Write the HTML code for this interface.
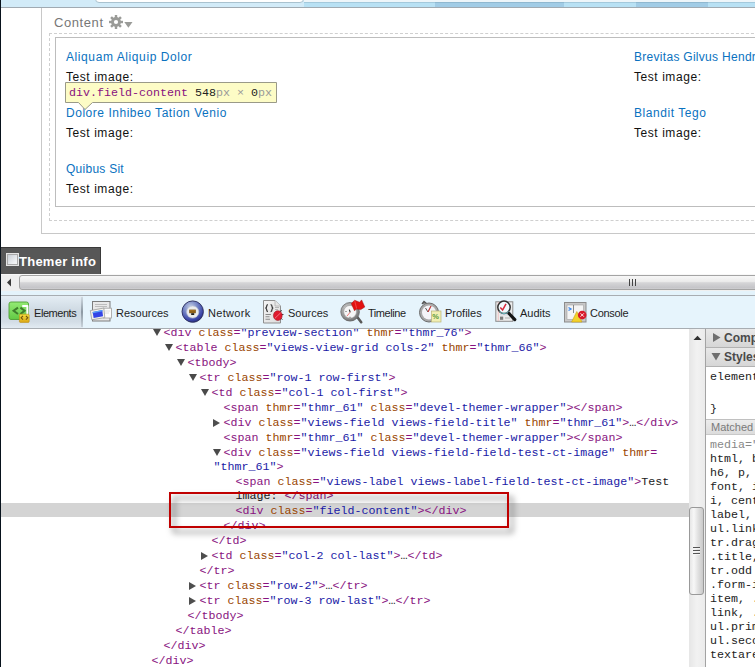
<!DOCTYPE html>
<html><head><meta charset="utf-8">
<style>
*{box-sizing:border-box}
html,body{margin:0;padding:0}
body{width:755px;height:667px;overflow:hidden;position:relative;background:#fff;font-family:"Liberation Sans",sans-serif}
.a{position:absolute}
.t{position:absolute;white-space:pre;line-height:1}
.ttl{font-size:12px;color:#0a72c0}
.lbl{font-size:12px;color:#111}
.codep{position:absolute;left:0;top:329px;width:689px;height:338px;overflow:hidden;font-family:"Liberation Mono",monospace;font-size:11.67px}
.ln{position:absolute;white-space:pre;line-height:14px;height:14px}
.tg{color:#881280}
.an{color:#994500}
.av{color:#1a1aa6}
.tx{color:#222}
.tri-d,.tri-r{position:absolute;width:0;height:0}
.tri-d{border-left:4px solid transparent;border-right:4px solid transparent;border-top:7px solid #4a4a4a;margin-top:3px}
.tri-r{border-top:4px solid transparent;border-bottom:4px solid transparent;border-left:7px solid #4e4e4e;margin-top:3px}
.tabl{position:absolute;top:307px;font-size:11px;color:#1e1e1e;white-space:pre;line-height:12px}
.sbl{position:absolute;left:710px;white-space:pre;font-family:"Liberation Mono",monospace;font-size:11.67px;line-height:14px;color:#222}
.ico{position:absolute;top:300px}
</style></head><body>

<!-- top band -->
<div class="a" style="left:0;top:0;width:755px;height:7px;background:#d2ebf8"></div>
<div class="a" style="left:95px;top:-6px;width:209px;height:9px;background:#fff;border:1px solid #a9c2cf;border-radius:4px"></div>
<div class="a" style="left:304px;top:0;width:451px;height:2px;background:#eef6fa"></div>
<div class="a" style="left:304px;top:2px;width:451px;height:5px;background:#b8e1f4;border-top:1px solid #a3c9dc"></div>
<div class="a" style="left:435px;top:2px;width:129px;height:5px;background:#a1cce6;border-top:1px solid #8fb8d0"></div>
<div class="a" style="left:636px;top:2px;width:72px;height:5px;background:#a1cce6;border-top:1px solid #8fb8d0"></div>
<div class="a" style="left:0;top:7px;width:755px;height:1px;background:#a0aab2"></div>
<!-- left dark edge -->
<div class="a" style="left:0;top:0;width:1px;height:667px;background:#08121c;z-index:5"></div>

<!-- page frame -->
<div class="a" style="left:41px;top:8px;width:714px;height:226px;border-left:1px solid #c8c8c8;border-bottom:1px solid #c8c8c8"></div>
<div class="t" style="left:54px;top:16px;font-size:13px;letter-spacing:0.58px;color:#777">Content</div>
<svg class="a" style="left:108px;top:14px" width="26" height="16" viewBox="0 0 26 16">
  <g fill="#9a9b98">
    <circle cx="8" cy="8" r="4.9"/>
    <g transform="translate(8 8)">
      <rect x="-1.2" y="-7" width="2.4" height="14"/>
      <rect x="-1.2" y="-7" width="2.4" height="14" transform="rotate(45)"/>
      <rect x="-1.2" y="-7" width="2.4" height="14" transform="rotate(90)"/>
      <rect x="-1.2" y="-7" width="2.4" height="14" transform="rotate(135)"/>
    </g>
  </g>
  <circle cx="8" cy="8" r="2.1" fill="#fff"/>
  <path d="M16.3 8 L24.5 8 L20.4 13.8 Z" fill="#9a9b98"/>
</svg>

<!-- dashed box -->
<div class="a" style="left:49px;top:33px;width:720px;height:188px;border:1px dashed #cfcfcf"></div>
<!-- solid box -->
<div class="a" style="left:55px;top:37px;width:710px;height:170px;border:1px solid #bdbdbd"></div>

<div class="t ttl" style="left:66px;top:51px;letter-spacing:0.59px">Aliquam Aliquip Dolor</div>
<div class="t lbl" style="left:66px;top:71px;letter-spacing:0.56px">Test image:</div>
<div class="t ttl" style="left:66px;top:107px;letter-spacing:0.53px">Dolore Inhibeo Tation Venio</div>
<div class="t lbl" style="left:66px;top:127px;letter-spacing:0.56px">Test image:</div>
<div class="t ttl" style="left:66px;top:163px;letter-spacing:0.26px">Quibus Sit</div>
<div class="t lbl" style="left:66px;top:183px;letter-spacing:0.56px">Test image:</div>
<div class="t ttl" style="left:634px;top:51px;letter-spacing:0.29px">Brevitas Gilvus Hendrerit</div>
<div class="t lbl" style="left:634px;top:71px;letter-spacing:0.56px">Test image:</div>
<div class="t ttl" style="left:634px;top:107px;letter-spacing:0.55px">Blandit Tego</div>
<div class="t lbl" style="left:634px;top:127px;letter-spacing:0.56px">Test image:</div>

<!-- tooltip -->
<svg class="a" style="left:64px;top:82px" width="215" height="30" viewBox="0 0 215 30">
  <path d="M1.5 0.5 H212.5 V20.5 H28.5 L21 27.5 L14.5 20.5 H1.5 Z" fill="#fdfcc6" stroke="#9a9a88" stroke-width="1"/>
</svg>
<div class="t" style="left:69px;top:86px;font-family:'Liberation Mono',monospace;font-size:11.67px;line-height:14px"><span style="color:#881280">div.field-content</span> <span style="color:#222">548</span><span style="color:#999">px × </span><span style="color:#222">0</span><span style="color:#999">px</span></div>

<!-- themer info -->
<div class="a" style="left:0;top:247px;width:101px;height:27px;background:#575757;border-top:1px solid #3a3a3a;border-right:1px solid #3a3a3a"></div>
<div class="a" style="left:6px;top:253px;width:13px;height:13px;border:1px solid #e4e4e4;box-shadow:inset 0 0 0 1px #a9a9a9;background:linear-gradient(135deg,#c3c9d1,#eef0f2 70%,#f7f7f7)"></div>
<div class="t" style="left:19px;top:255px;font-size:13px;font-weight:bold;letter-spacing:0.25px;color:#fff">Themer info</div>

<!-- h scrollbar -->
<div class="a" style="left:1px;top:274px;width:754px;height:17px;background:#efefef;border-top:1px solid #f8f8f8"></div>
<svg class="a" style="left:6px;top:278px" width="6" height="9"><path d="M1 4.5 L5 0.5 V8.5 Z" fill="#3a3a3a"/></svg>
<div class="a" style="left:19px;top:275px;width:745px;height:15px;border:1px solid #a4a4a4;border-radius:3px;background:linear-gradient(#f7f7f7 0%,#ebebeb 42%,#d5d5d7 52%,#c5c5c9 88%,#cdcdd0 100%)"></div>
<div class="a" style="left:629px;top:279px;width:1px;height:7px;background:#444"></div>
<div class="a" style="left:632px;top:279px;width:1px;height:7px;background:#444"></div>
<div class="a" style="left:635px;top:279px;width:1px;height:7px;background:#444"></div>
<div class="a" style="left:1px;top:291px;width:754px;height:4px;background:#e4f3fb"></div>

<!-- toolbar -->
<div class="a" style="left:1px;top:295px;width:754px;height:1px;background:#a8adb2"></div>
<div class="a" style="left:1px;top:296px;width:754px;height:32px;background:#e6f4fc"></div>
<div class="a" style="left:1px;top:296px;width:82px;height:32px;background:linear-gradient(#e4edf4,#cdd8e1 50%,#d3dde6 80%,#e2ebf2)"></div>
<div class="a" style="left:81px;top:297px;width:2px;height:30px;background:linear-gradient(#d0dae2,#8d99a3 50%,#c9d3db);filter:blur(0.4px)"></div>
<div class="a" style="left:0;top:328px;width:755px;height:1px;background:#a8adb2"></div>
<!-- Elements icon -->
<svg class="a" style="left:8px;top:301px" width="23" height="23" viewBox="0 0 23 23">
  <defs>
    <linearGradient id="gg" x1="0" y1="0" x2="0" y2="1"><stop offset="0" stop-color="#94ea74"/><stop offset="1" stop-color="#62c944"/></linearGradient>
    <linearGradient id="yg" x1="0" y1="0" x2="0" y2="1"><stop offset="0" stop-color="#f6dc3c"/><stop offset="1" stop-color="#dba716"/></linearGradient>
  </defs>
  <rect x="1" y="1" width="19.5" height="17.5" rx="2" fill="url(#gg)" stroke="#4f9e36" stroke-width="0.9"/>
  <path d="M10 6.6 L5.6 9.8 L10 13" fill="none" stroke="#3f7d2c" stroke-width="2"/>
  <path d="M12.4 6.6 L16.6 9.8 L12.4 13" fill="none" stroke="#3f7d2c" stroke-width="2"/>
  <path d="M15 4.9 H19.4 V14.5" fill="none" stroke="#fff" stroke-width="2" stroke-linecap="round" stroke-linejoin="round"/>
  <rect x="11.4" y="13.2" width="9.8" height="8.2" rx="1" fill="url(#yg)" stroke="#b98d10" stroke-width="0.6"/>
  <path d="M15 14.9 L13.1 16.8 L15 18.7 M17.9 14.9 L19.8 16.8 L17.9 18.7" fill="none" stroke="#6d5510" stroke-width="1.1"/>
</svg>
<div class="tabl" style="left:34px;letter-spacing:-0.45px">Elements</div>

<!-- Resources icon -->
<svg class="a" style="left:86px;top:298px" width="30" height="28" viewBox="0 0 30 28">
  <rect x="6.5" y="3.5" width="17.5" height="19.5" fill="#e9e9e9" stroke="#7d7d7d" stroke-width="1"/>
  <path d="M9 6.5 H21 M9 8.5 H21" stroke="#bdbdbd" stroke-width="1"/>
  <rect x="17.5" y="10.2" width="8" height="9.8" fill="#fcfcfc" stroke="#a8a8a8" stroke-width="0.9"/>
  <path d="M19 13 H24 M19 15 H23" stroke="#d8d8d8" stroke-width="0.8"/>
  <path d="M4.3 12.6 L17.8 10 L18.8 19.6 L5.8 21.8 Z" fill="#f3f2ea" stroke="#9b9b9b" stroke-width="0.8"/>
  <path d="M6.6 14.1 L16.3 12.1 L17 18.2 L7.6 19.9 Z" fill="#3444e6"/>
  <path d="M6.6 14.1 L16.3 12.1 L16.4 13.2 L6.8 15.3 Z" fill="#58a6f8"/>
</svg>
<div class="tabl" style="left:116px">Resources</div>

<!-- Network icon -->
<svg class="a" style="left:180px;top:300px" width="26" height="24" viewBox="0 0 26 24">
  <defs><radialGradient id="ng" cx="0.4" cy="0.3" r="0.75"><stop offset="0" stop-color="#c9d3e6"/><stop offset="0.45" stop-color="#7383c4"/><stop offset="0.8" stop-color="#3a44a8"/><stop offset="1" stop-color="#242a70"/></radialGradient></defs>
  <circle cx="12.7" cy="11.6" r="10.7" fill="url(#ng)" stroke="#2a2d5a" stroke-width="0.9"/>
  <circle cx="12.7" cy="12" r="6.1" fill="#ececec" stroke="#b9c0d6" stroke-width="0.6"/>
  <rect x="9.2" y="9.6" width="6.6" height="3.6" fill="#7c5312"/>
  <path d="M10 10.6 H15 M10 12 H15" stroke="#b07a24" stroke-width="0.8"/>
  <rect x="11.2" y="13.2" width="3" height="1.8" fill="#1d1d1d"/>
</svg>
<div class="tabl" style="left:208px;letter-spacing:0.3px">Network</div>

<!-- Sources icon -->
<svg class="a" style="left:259px;top:298px" width="30" height="28" viewBox="0 0 30 28">
  <defs><linearGradient id="dg" x1="0" y1="0" x2="1" y2="1"><stop offset="0" stop-color="#f4f4f4"/><stop offset="1" stop-color="#dcdcdc"/></linearGradient></defs>
  <path d="M4.5 2.5 H16 L21.5 8 V25 H4.5 Z" fill="url(#dg)" stroke="#8f8f8f" stroke-width="1"/>
  <path d="M16 2.5 V8 H21.5" fill="#e6e6e6" stroke="#b0b0b0" stroke-width="0.8"/>
  <path d="M9 6.6 C7.6 6.6 7.6 7.4 7.6 8.6 C7.6 9.6 7.2 10 6.4 10.1 C7.2 10.2 7.6 10.6 7.6 11.6 C7.6 12.8 7.6 13.6 9 13.6" fill="none" stroke="#3d3d3d" stroke-width="1.3"/>
  <path d="M11.6 6.6 C13 6.6 13 7.4 13 8.6 C13 9.6 13.4 10 14.2 10.1 C13.4 10.2 13 10.6 13 11.6 C13 12.8 13 13.6 11.6 13.6" fill="none" stroke="#3d3d3d" stroke-width="1.3"/>
  <path d="M6.5 16.5 H12 M6.5 18.8 H10.5 M6.5 21.2 H11" stroke="#8a8a8a" stroke-width="1.1"/>
  <path d="M16 9.5 H20 M16 11.5 H19" stroke="#a8a8a8" stroke-width="0.8"/>
  <path d="M21 13.5 L23 12.5 M22 16.5 L24.5 16.5 M21.5 20 L23.5 21.5" stroke="#333" stroke-width="0.9"/>
  <ellipse cx="18.8" cy="17.6" rx="4.4" ry="4.9" fill="#e01a2e" stroke="#8a0c16" stroke-width="0.5"/>
  <path d="M15.8 20.4 L21.6 14.8" stroke="#f59aa2" stroke-width="0.7"/>
</svg>
<div class="tabl" style="left:288px">Sources</div>

<!-- Timeline icon -->
<svg class="a" style="left:338px;top:297px" width="30" height="30" viewBox="0 0 30 30">
  <defs><radialGradient id="rg" cx="0.4" cy="0.35" r="0.7"><stop offset="0" stop-color="#d8d8d8"/><stop offset="1" stop-color="#6e6e6e"/></radialGradient></defs>
  <path d="M18.5 19 L23.2 25.2" stroke="#5a5a5a" stroke-width="2.6" stroke-linecap="round"/>
  <circle cx="12.1" cy="14.8" r="9.3" fill="url(#rg)" stroke="#6a6a6a" stroke-width="0.8"/>
  <circle cx="12.1" cy="14.8" r="6.4" fill="#f6f6f6" stroke="#9a9a9a" stroke-width="0.6"/>
  <path d="M12.2 15.2 L9 19" stroke="#f06a6a" stroke-width="0.9"/>
  <path d="M12.2 15.2 L11.3 12.6" stroke="#333" stroke-width="1.1"/>
  <path d="M7.5 14.5 h1 M12 19.8 v1" stroke="#444" stroke-width="0.9"/>
  <path d="M13.3 6.6 L16.6 3.2 L21.6 5.3 L23.6 2.9 L26.8 10 L22.8 12.6 L18.3 12 L16.5 13.8 Z" fill="#e3100f" stroke="#a30a0a" stroke-width="0.5"/>
  <path d="M16.6 3.2 L18.6 11.6" stroke="#ff6a6a" stroke-width="0.8" opacity="0.7"/>
</svg>
<div class="tabl" style="left:368px;letter-spacing:-0.45px">Timeline</div>

<!-- Profiles icon -->
<svg class="a" style="left:418px;top:299px" width="24" height="25" viewBox="0 0 24 25">
  <path d="M4 5 L6 2.5 L8.5 4.5" fill="#777" stroke="#555" stroke-width="1.3"/>
  <circle cx="11" cy="13.5" r="9.5" fill="#a8a8a8" stroke="#6d6d6d" stroke-width="1"/>
  <circle cx="11" cy="13.5" r="7" fill="#f4f4f8"/>
  <path d="M7.5 9 L10 13 L13 7" fill="none" stroke="#444" stroke-width="0.9"/>
  <path d="M10 13 L13 7" stroke="#e33" stroke-width="0.9"/>
  <rect x="13.5" y="12" width="9.5" height="11" fill="#f2efb2" stroke="#b8b47a" stroke-width="0.7"/>
  <text x="14.3" y="19.5" font-family="Liberation Sans" font-size="7.5" font-weight="bold" fill="#5c9a3c">%</text>
</svg>
<div class="tabl" style="left:445px">Profiles</div>

<!-- Audits icon -->
<svg class="a" style="left:491px;top:297px" width="30" height="30" viewBox="0 0 30 30">
  <rect x="4.8" y="4.8" width="17" height="19.5" fill="#ececec" stroke="#8c8c8c" stroke-width="1"/>
  <path d="M7.3 5 V24" stroke="#f2b4b4" stroke-width="0.7"/>
  <path d="M9 15.5 H20 M9 17.8 H20" stroke="#c9d2e0" stroke-width="0.8"/>
  <rect x="9" y="19.6" width="3.2" height="3.2" fill="#7a7a7a"/>
  <path d="M14 21 H19" stroke="#b0b0b0" stroke-width="1"/>
  <path d="M18 16.5 L23.8 22.6" stroke="#151515" stroke-width="3.2" stroke-linecap="round"/>
  <circle cx="13" cy="10.3" r="6.2" fill="#f2fafd" stroke="#2e2e2e" stroke-width="1.5"/>
  <path d="M9.3 10.6 L11.6 13 L15 6.8" fill="none" stroke="#d8293a" stroke-width="1.5"/>
  <path d="M8.5 14.5 A6 6 0 0 0 17.5 14.5" fill="none" stroke="#7fe0ea" stroke-width="0.8"/>
</svg>
<div class="tabl" style="left:520px">Audits</div>

<!-- Console icon -->
<svg class="a" style="left:563px;top:300px" width="25" height="24" viewBox="0 0 25 24">
  <rect x="1.5" y="2.5" width="21.5" height="19.5" fill="#c8c8c8" stroke="#8c8c8c" stroke-width="1"/>
  <rect x="4" y="5" width="16.5" height="14.5" fill="#f5f5f5" stroke="#a0a0a0" stroke-width="0.6"/>
  <path d="M10.5 5 V13" stroke="#888" stroke-width="1"/>
  <path d="M5.5 7.5 L8 9 L5.5 10.5" fill="none" stroke="#3a8af0" stroke-width="1.3"/>
  <path d="M13.8 11.5 L8.6 22 H19 Z" fill="#f2d22e" stroke="#c9a210" stroke-width="0.6"/>
  <circle cx="19.2" cy="15" r="4.3" fill="#d81a2a"/>
  <path d="M17.5 13.3 L20.9 16.7 M20.9 13.3 L17.5 16.7" stroke="#fff" stroke-width="0.9"/>
</svg>
<div class="tabl" style="left:590px;letter-spacing:-0.3px">Console</div>

<!-- code panel -->
<div class="codep">
<div class="tri-d" style="left:153.0px;top:-3px"></div>
<div class="ln" style="left:163.6px;top:-3px"><span class="tg">&lt;div</span> <span class="an">class</span><span class="tg">=</span><span class="av">"preview-section"</span> <span class="an">thmr</span><span class="tg">=</span><span class="av">"thmr_76"</span><span class="tg">&gt;</span></div>
<div class="tri-d" style="left:165.0px;top:12px"></div>
<div class="ln" style="left:175.6px;top:12px"><span class="tg">&lt;table</span> <span class="an">class</span><span class="tg">=</span><span class="av">"views-view-grid cols-2"</span> <span class="an">thmr</span><span class="tg">=</span><span class="av">"thmr_66"</span><span class="tg">&gt;</span></div>
<div class="tri-d" style="left:177.0px;top:27px"></div>
<div class="ln" style="left:187.6px;top:27px"><span class="tg">&lt;tbody</span><span class="tg">&gt;</span></div>
<div class="tri-d" style="left:189.0px;top:42px"></div>
<div class="ln" style="left:199.6px;top:42px"><span class="tg">&lt;tr</span> <span class="an">class</span><span class="tg">=</span><span class="av">"row-1 row-first"</span><span class="tg">&gt;</span></div>
<div class="tri-d" style="left:201.0px;top:57px"></div>
<div class="ln" style="left:211.6px;top:57px"><span class="tg">&lt;td</span> <span class="an">class</span><span class="tg">=</span><span class="av">"col-1 col-first"</span><span class="tg">&gt;</span></div>
<div class="ln" style="left:223.6px;top:72px"><span class="tg">&lt;span</span> <span class="an">thmr</span><span class="tg">=</span><span class="av">"thmr_61"</span> <span class="an">class</span><span class="tg">=</span><span class="av">"devel-themer-wrapper"</span><span class="tg">&gt;</span><span class="tg">&lt;/span&gt;</span></div>
<div class="tri-r" style="left:213.0px;top:87px"></div>
<div class="ln" style="left:223.6px;top:87px"><span class="tg">&lt;div</span> <span class="an">class</span><span class="tg">=</span><span class="av">"views-field views-field-title"</span> <span class="an">thmr</span><span class="tg">=</span><span class="av">"thmr_61"</span><span class="tg">&gt;</span><span class="tx">…</span><span class="tg">&lt;/div&gt;</span></div>
<div class="ln" style="left:223.6px;top:102px"><span class="tg">&lt;span</span> <span class="an">thmr</span><span class="tg">=</span><span class="av">"thmr_61"</span> <span class="an">class</span><span class="tg">=</span><span class="av">"devel-themer-wrapper"</span><span class="tg">&gt;</span><span class="tg">&lt;/span&gt;</span></div>
<div class="tri-d" style="left:213.0px;top:117px"></div>
<div class="ln" style="left:223.6px;top:117px"><span class="tg">&lt;div</span> <span class="an">class</span><span class="tg">=</span><span class="av">"views-field views-field-field-test-ct-image"</span> <span class="an">thmr</span><span class="tg">=</span></div>
<div class="ln" style="left:213.6px;top:131px"><span class="av">"thmr_61"</span><span class="tg">&gt;</span></div>
<div class="ln" style="left:235.6px;top:146px"><span class="tg">&lt;span</span> <span class="an">class</span><span class="tg">=</span><span class="av">"views-label views-label-field-test-ct-image"</span><span class="tg">&gt;</span><span class="tx">Test</span></div>
<div class="ln" style="left:235.6px;top:160px"><span class="tx">image: </span><span class="tg">&lt;/span&gt;</span></div>
<div class="a" style="left:0;top:174px;width:689px;height:14px;background:#d4d4d4"></div>
<div class="ln" style="left:235.6px;top:175px"><span class="tg">&lt;div</span> <span class="an">class</span><span class="tg">=</span><span class="av">"field-content"</span><span class="tg">&gt;</span><span class="tg">&lt;/div&gt;</span></div>
<div class="ln" style="left:223.6px;top:190px"><span class="tg">&lt;/div&gt;</span></div>
<div class="ln" style="left:211.6px;top:205px"><span class="tg">&lt;/td&gt;</span></div>
<div class="tri-r" style="left:201.0px;top:220px"></div>
<div class="ln" style="left:211.6px;top:220px"><span class="tg">&lt;td</span> <span class="an">class</span><span class="tg">=</span><span class="av">"col-2 col-last"</span><span class="tg">&gt;</span><span class="tx">…</span><span class="tg">&lt;/td&gt;</span></div>
<div class="ln" style="left:199.6px;top:235px"><span class="tg">&lt;/tr&gt;</span></div>
<div class="tri-r" style="left:189.0px;top:250px"></div>
<div class="ln" style="left:199.6px;top:250px"><span class="tg">&lt;tr</span> <span class="an">class</span><span class="tg">=</span><span class="av">"row-2"</span><span class="tg">&gt;</span><span class="tx">…</span><span class="tg">&lt;/tr&gt;</span></div>
<div class="tri-r" style="left:189.0px;top:265px"></div>
<div class="ln" style="left:199.6px;top:265px"><span class="tg">&lt;tr</span> <span class="an">class</span><span class="tg">=</span><span class="av">"row-3 row-last"</span><span class="tg">&gt;</span><span class="tx">…</span><span class="tg">&lt;/tr&gt;</span></div>
<div class="ln" style="left:187.6px;top:280px"><span class="tg">&lt;/tbody&gt;</span></div>
<div class="ln" style="left:175.6px;top:295px"><span class="tg">&lt;/table&gt;</span></div>
<div class="ln" style="left:163.6px;top:310px"><span class="tg">&lt;/div&gt;</span></div>
<div class="ln" style="left:151.6px;top:325px"><span class="tg">&lt;/div&gt;</span></div>

</div>
<!-- code v scrollbar -->
<div class="a" style="left:689px;top:329px;width:16px;height:338px;background:linear-gradient(90deg,#e6e6e6,#f2f2f2 50%,#ebebeb)"></div>
<svg class="a" style="left:693px;top:335px" width="9" height="6"><path d="M0.5 5 L4.5 0.8 L8.5 5 Z" fill="#333"/></svg>
<div class="a" style="left:689px;top:507px;width:15px;height:88px;border:1px solid #999;border-radius:3px;background:linear-gradient(90deg,#e6e6e6,#f7f7f7 30%,#e2e2e2 60%,#c9c9c9)"></div>
<div class="a" style="left:693px;top:547px;width:7px;height:1px;background:#555;border-bottom:1px solid #f4f4f4;box-sizing:content-box"></div>
<div class="a" style="left:693px;top:550px;width:7px;height:1px;background:#555;border-bottom:1px solid #f4f4f4;box-sizing:content-box"></div>
<div class="a" style="left:693px;top:553px;width:7px;height:1px;background:#555;border-bottom:1px solid #f4f4f4;box-sizing:content-box"></div>

<!-- sidebar -->
<div class="a" style="left:705px;top:329px;width:1px;height:338px;background:#a3a3a3"></div>
<div class="a" style="left:706px;top:329px;width:49px;height:19px;background:linear-gradient(#e8e8e8,#d6d6d6);border-bottom:1px solid #b2b2b2"></div>
<svg class="a" style="left:712px;top:332px" width="10" height="11"><path d="M1 1 L8.5 5.5 L1 10 Z" fill="#6e6e6e"/></svg>
<div class="t" style="left:724px;top:332px;font-size:12px;font-weight:bold;color:#4a4a4a;line-height:12px">Computed Style</div>
<div class="a" style="left:706px;top:348px;width:49px;height:19px;background:linear-gradient(#e8e8e8,#d6d6d6);border-bottom:1px solid #b2b2b2"></div>
<svg class="a" style="left:711px;top:352px" width="10" height="10"><path d="M0.5 1 L9.5 1 L5 8.5 Z" fill="#6e6e6e"/></svg>
<div class="t" style="left:724px;top:351px;font-size:12px;font-weight:bold;color:#4a4a4a;line-height:12px">Styles</div>
<div class="sbl" style="top:370px">element.style {</div>
<div class="sbl" style="top:402px">}</div>
<div class="a" style="left:706px;top:419px;width:49px;height:16px;background:linear-gradient(#ececec,#dcdcdc);border-top:1px solid #c0c0c0;border-bottom:1px solid #c8c8c8"></div>
<div class="t" style="left:711px;top:421px;font-size:11px;color:#7a7a7a;line-height:12px">Matched CSS Rules</div>
<div class="sbl" style="top:438px;color:#888">media="all"</div>
<div class="sbl" style="top:452px">html, body, div</div>
<div class="sbl" style="top:466px">h6, p, blockquote</div>
<div class="sbl" style="top:480px">font, img, ins</div>
<div class="sbl" style="top:494px">i, center, dl</div>
<div class="sbl" style="top:508px">label, legend</div>
<div class="sbl" style="top:522px">ul.links li</div>
<div class="sbl" style="top:536px">tr.drag td</div>
<div class="sbl" style="top:550px">.title, .node</div>
<div class="sbl" style="top:564px">tr.odd td</div>
<div class="sbl" style="top:578px">.form-item</div>
<div class="sbl" style="top:592px">item, .pager</div>
<div class="sbl" style="top:606px">link, .more</div>
<div class="sbl" style="top:620px">ul.primary li</div>
<div class="sbl" style="top:634px">ul.secondary li</div>
<div class="sbl" style="top:648px">textarea</div>

<!-- red annotation -->
<div class="a" style="left:169px;top:492px;width:340px;height:36px;border:2px solid #c00000;filter:drop-shadow(4px 5px 3px rgba(0,0,0,0.55))"></div>

</body></html>
